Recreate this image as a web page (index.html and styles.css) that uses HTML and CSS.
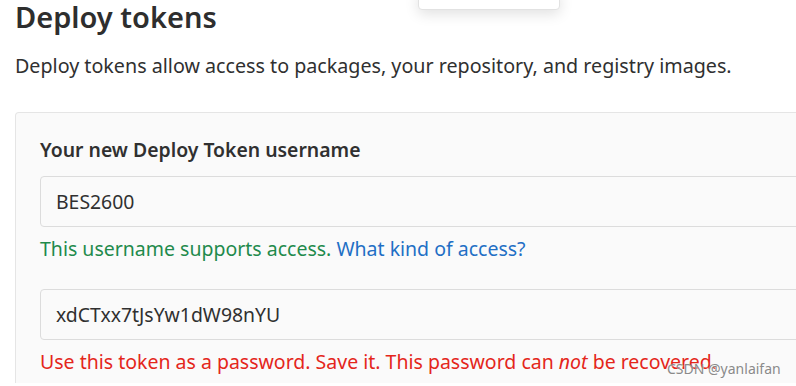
FILE: index.html
```html
<!DOCTYPE html>
<html lang="en">
<head>
    <meta charset="UTF-8">
    <meta name="viewport" content="width=device-width, initial-scale=1.0">
    <title>Deploy tokens</title>
    <link rel="stylesheet" href="styles.css">
</head>

<body>
    <div class="page">
        <h1 class="page-title">Deploy tokens</h1>
        <p class="page-lead">Deploy tokens allow access to packages, your repository, and registry images.</p>

        <!-- Token criado -->
        <div class="token-card">
            <label class="field-label" for="deploy-username">Your new Deploy Token username</label>
            <input class="field-input" id="deploy-username" type="text" value="BES2600" readonly>
            <p class="field-help help-ok">This username supports access. <a href="#access">What kind of access?</a></p>

            <input class="field-input" id="deploy-token" type="text" value="xdCTxx7tJsYw1dW98nYU" readonly>
            <p class="field-help help-danger">Use this token as a password. Save it. This password can <em>not</em> be recovered.</p>
        </div>
    </div>

    <!-- Menu aberto no topo -->
    <div class="dropdown-stub"></div>

    <span class="watermark">CSDN @yanlaifan</span>
</body>
</html>
```

FILE: styles.css
```css
/* Reset */
* {
    margin: 0;
    padding: 0;
    box-sizing: border-box;
}

body {
    font-family: 'Noto Sans', 'Open Sans', sans-serif;
    background-color: #ffffff;
    color: #303030;
    overflow: hidden;
}

.page {
    padding: 0 0 0 15px;
}

.page-title {
    font-size: 29px;
    font-weight: 600;
    line-height: 34px;
    color: #2e2e2e;
}

.page-lead {
    font-size: 19.7px;
    line-height: 26px;
    margin-top: 19px;
    color: #303030;
    white-space: nowrap;
}

/* Cartão do token */
.token-card {
    margin-top: 33px;
    width: 820px;
    background-color: #fafafa;
    border: 1px solid #e5e5e5;
    border-bottom: none;
    border-radius: 4px 4px 0 0;
    padding: 24px 24px 8px 24px;
}

.field-label {
    display: block;
    font-size: 19.4px;
    font-weight: 600;
    line-height: 26px;
    color: #303030;
}

.field-input {
    display: block;
    width: 100%;
    height: 51px;
    margin-top: 13px;
    padding: 0 15px;
    font-family: inherit;
    font-size: 19.4px;
    color: #303030;
    background-color: #fafafa;
    border: 1px solid #dcdcdc;
    border-radius: 4px;
    outline: none;
}

.field-help {
    font-size: 19.5px;
    line-height: 26px;
    margin-top: 9px;
    margin-bottom: 27px;
    white-space: nowrap;
}

.field-help:last-child {
    margin-bottom: 0;
}

.help-ok {
    color: #1f8a4c;
}

.help-ok a {
    color: #1f6fc5;
    text-decoration: none;
}

.help-danger {
    color: #e4261b;
}

/* Sobreposições */
.dropdown-stub {
    position: absolute;
    top: -10px;
    left: 418px;
    width: 142px;
    height: 20px;
    background: #ffffff;
    border: 1px solid #e2e2e2;
    border-radius: 4px;
    box-shadow: 0 4px 14px rgba(0, 0, 0, 0.12);
}

.watermark {
    position: absolute;
    left: 667px;
    top: 359px;
    font-family: 'Noto Sans', sans-serif;
    font-size: 14px;
    color: #8a8a8a;
    text-shadow: 1px 1px 0 rgba(255, 255, 255, 0.6);
}
```
